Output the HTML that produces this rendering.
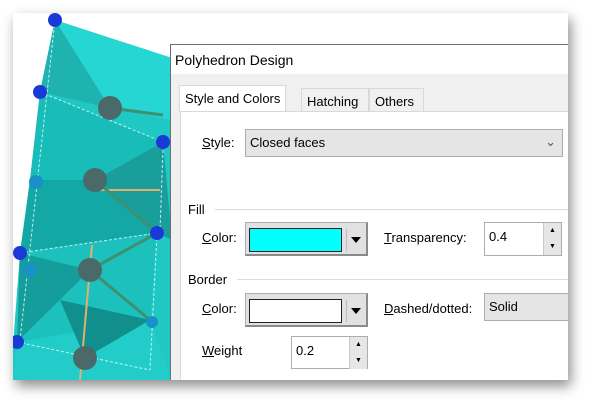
<!DOCTYPE html>
<html><head><meta charset="utf-8"><style>
*{margin:0;padding:0;box-sizing:border-box}
body{width:600px;height:412px;background:#fff;position:relative;overflow:hidden;font-family:"Liberation Sans","Noto Sans CJK SC",sans-serif;font-size:13px;color:#000}
.frame{position:absolute;left:13px;top:13px;width:555px;height:367px;overflow:hidden;box-shadow:3px 6px 12px rgba(0,0,0,.45);background:#fff}
.a{position:absolute}
.dlg{left:157px;top:31px;width:400px;height:340px;background:#f0f0f0;border-left:1px solid #6e6e6e;border-top:1px solid #6e6e6e}
.tb{left:0;top:0;width:400px;height:29px;background:#fff}
.tab{position:absolute;height:25px;border:1px solid #d9d9d9;border-bottom:none;background:#f0f0f0;padding:5px 5px 0;font-size:13px}
.page{left:9px;top:66px;width:390px;height:280px;background:#fff;border:1px solid #d9d9d9}
u{text-decoration:underline}
.combo{position:absolute;background:#e5e5e5;border:1px solid #adadad;padding:5px 4px}
.cbtn{position:absolute;width:123px;height:34px;background:#e1e1e1;border:1px solid #adadad;border-bottom:2px solid #8a8a8a;border-right:2px solid #8a8a8a}
.sw{position:absolute;left:3px;top:5px;width:93px;height:24px;border:1.5px solid #222}
.sep{position:absolute;left:100px;top:6px;width:1px;height:22px;background:#bbb}
.arr{position:absolute;left:105px;top:14px;border-left:5px solid transparent;border-right:5px solid transparent;border-top:6px solid #000}
.spin{position:absolute;background:#fff;border:1px solid #adadad;padding:6px 4px}
.sb{position:absolute;right:0;width:18px;background:#e6e6e6;border-left:1px solid #c8c8c8}
.line{position:absolute;height:1px;background:#dcdcdc}
</style></head><body>
<div class="frame">
<svg class="a" style="left:0;top:0" width="160" height="367" viewBox="13 13 160 367">
<polygon points="55,20 172,58 172,380 13,380 13,345 20,253 30,180 40,92" fill="#20c8c4"/>
<polygon points="55,20 172,58 172,120 40,92" fill="#25d6d2"/>
<polygon points="55,20 40,92 110,108" fill="#1fb3b0"/>
<polygon points="40,92 163,142 95,180 30,180" fill="#18bcb8"/>
<polygon points="30,180 95,180 157,233 20,253" fill="#13a8a5"/>
<polygon points="95,180 163,142 172,240 157,233" fill="#1a9e9b"/>
<polygon points="20,253 157,233 150,320 17,342" fill="#1cc0bc"/>
<polygon points="20,253 90,270 17,342" fill="#149d9a"/>
<polygon points="17,342 150,320 172,380 13,380" fill="#22cdc9"/>
<polygon points="60,300 150,320 85,358" fill="#108f8c"/>
<g stroke="#e8ffff" stroke-width="1" stroke-dasharray="3,2" fill="none" opacity=".8">
<line x1="55" y1="20" x2="20" y2="340"/><line x1="40" y1="92" x2="163" y2="142"/><line x1="20" y1="253" x2="157" y2="233"/><line x1="157" y1="233" x2="150" y2="370"/><line x1="17" y1="342" x2="150" y2="370"/><line x1="163" y1="150" x2="160" y2="230"/>
</g>
<g stroke="#e0b070" stroke-width="2"><line x1="92" y1="245" x2="80" y2="380"/><line x1="160" y1="190" x2="100" y2="190"/></g>
<g stroke="#3f9070" stroke-width="3"><line x1="95" y1="180" x2="157" y2="233"/><line x1="90" y1="270" x2="157" y2="233"/><line x1="90" y1="270" x2="150" y2="320"/><line x1="110" y1="108" x2="163" y2="115"/></g>
<g fill="#4a6a6a"><circle cx="110" cy="108" r="12"/><circle cx="95" cy="180" r="12"/><circle cx="90" cy="270" r="12"/><circle cx="85" cy="358" r="12"/></g>
<g fill="#1a3ad8"><circle cx="55" cy="20" r="7"/><circle cx="40" cy="92" r="7"/><circle cx="163" cy="142" r="7"/><circle cx="20" cy="253" r="7"/><circle cx="157" cy="233" r="7"/><circle cx="17" cy="342" r="7"/></g>
<g fill="#1a90c8"><circle cx="36" cy="182" r="7"/><circle cx="30" cy="270" r="7"/><circle cx="152" cy="322" r="6"/></g>
</svg>
<div class="a dlg">
<div class="a tb"><span class="a" style="left:4px;top:7px;font-size:14px">Polyhedron Design</span></div>
<div class="tab" style="left:8px;top:40px;height:27px;background:#fff;border-color:#d9d9d9;padding-top:5px">Style and Colors</div>
<div class="tab" style="left:130px;top:43px;width:68px">Hatching</div>
<div class="tab" style="left:198px;top:43px;width:55px">Others</div>
<div class="a page"></div>
</div>
<span class="a" style="left:189px;top:122px"><u>S</u>tyle:</span>
<div class="combo" style="left:232px;top:116px;width:318px;height:28px">Closed faces<span style="position:absolute;right:6px;top:4px;color:#555">&#8964;</span></div>
<span class="a" style="left:175px;top:189px">Fill</span>
<div class="line" style="left:202px;top:196px;width:360px"></div>
<span class="a" style="left:189px;top:217px"><u>C</u>olor:</span>
<div class="cbtn" style="left:232px;top:209px"><div class="sw" style="background:#00ffff"></div><div class="sep"></div><div class="arr"></div></div>
<span class="a" style="left:371px;top:217px"><u>T</u>ransparency:</span>
<div class="spin" style="left:471px;top:209px;width:78px;height:34px">0.4<div class="sb" style="top:0;height:16px;font-size:7px;text-align:center;line-height:16px">&#9650;</div><div class="sb" style="top:16px;height:16px;font-size:7px;text-align:center;line-height:16px">&#9660;</div></div>
<span class="a" style="left:175px;top:259px">Border</span>
<div class="line" style="left:224px;top:266px;width:340px"></div>
<span class="a" style="left:189px;top:288px"><u>C</u>olor:</span>
<div class="cbtn" style="left:232px;top:280px"><div class="sw" style="background:#fff"></div><div class="sep"></div><div class="arr"></div></div>
<span class="a" style="left:371px;top:288px"><u>D</u>ashed/dotted:</span>
<div class="combo" style="left:471px;top:280px;width:90px;height:28px">Solid</div>
<span class="a" style="left:189px;top:330px"><u>W</u>eight</span>
<div class="spin" style="left:278px;top:323px;width:77px;height:33px">0.2<div class="sb" style="top:0;height:16px;font-size:7px;text-align:center;line-height:16px">&#9650;</div><div class="sb" style="top:16px;height:16px;font-size:7px;text-align:center;line-height:16px">&#9660;</div></div>
</div>
</body></html>
